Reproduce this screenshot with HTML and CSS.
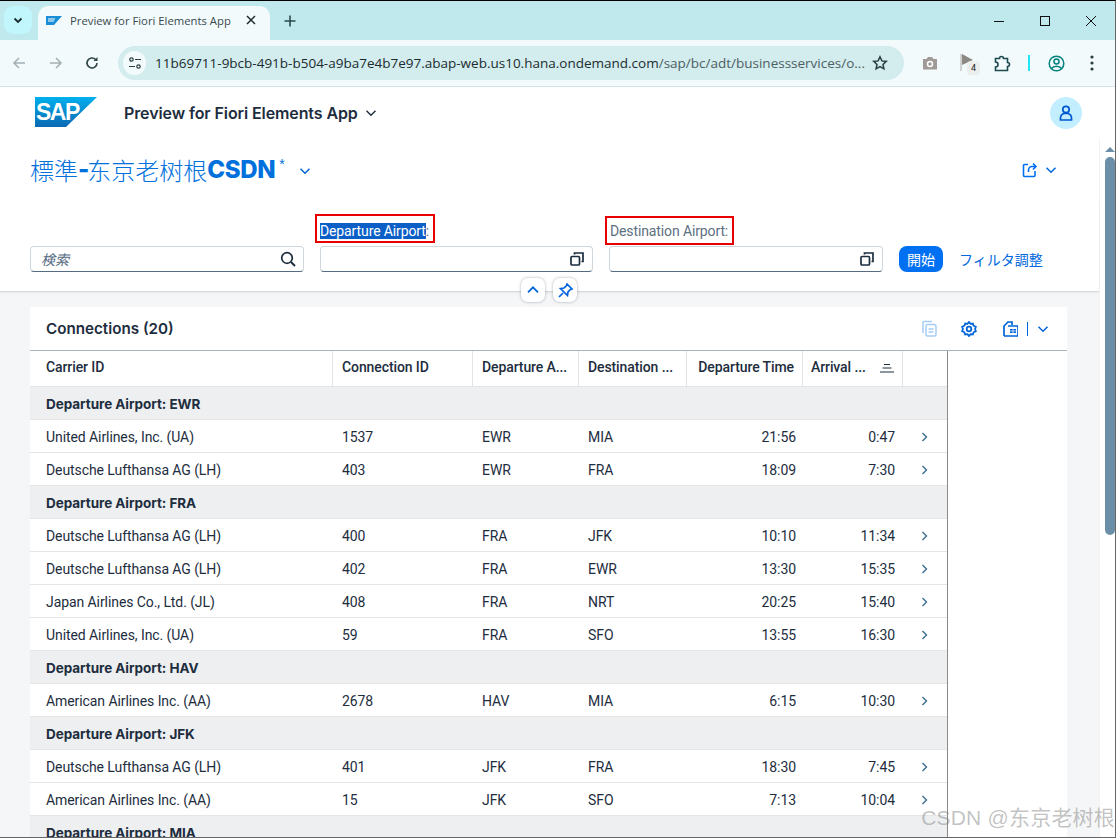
FILE: index.html
```html
<!DOCTYPE html>
<html lang="en">
<head>
<meta charset="utf-8">
<title>Preview for Fiori Elements App</title>
<link rel="stylesheet" href="styles.css">
</head>
<body>
<div class="window">
  <div class="tabbar">
    <button class="tab-menu"><svg width="12" height="12" viewBox="0 0 12 12"><path d="M2.5 4.5 6 8l3.5-3.5" fill="none" stroke="#1b2b2e" stroke-width="1.8"/></svg></button>
    <div class="tab">
      <svg class="tab-logo" width="16" height="9" viewBox="0 0 16 9"><polygon points="0,0 16,0 8,9 0,9" fill="#1a8fd8"/><path d="M2 3h7M2 5h6" stroke="#fff" stroke-width="1"/></svg>
      <span class="tab-title">Preview for Fiori Elements App</span>
      <svg class="tab-close" width="10" height="10" viewBox="0 0 10 10"><path d="M1 1l8 8M9 1l-8 8" stroke="#1f2b2d" stroke-width="1.5"/></svg>
    </div>
    <svg class="tab-plus" width="12" height="12" viewBox="0 0 12 12"><path d="M6 .5v11M.5 6h11" stroke="#2b4a4e" stroke-width="1.6"/></svg>
    <div class="win-controls">
      <svg width="12" height="12" viewBox="0 0 12 12"><path d="M1 6.5h10" stroke="#111" stroke-width="1"/></svg>
      <svg width="12" height="12" viewBox="0 0 12 12"><rect x="1.5" y="1.5" width="9" height="9" fill="none" stroke="#111"/></svg>
      <svg width="12" height="12" viewBox="0 0 12 12"><path d="M1 1l10 10M11 1 1 11" stroke="#111" stroke-width="1"/></svg>
    </div>
  </div>
  <div class="toolbar">
    <svg class="nav" width="14" height="14" viewBox="0 0 14 14"><path d="M13 7H2M7 2 2 7l5 5" fill="none" stroke="#a3b0b2" stroke-width="1.5"/></svg>
    <svg class="nav" width="14" height="14" viewBox="0 0 14 14"><path d="M1 7h11M7 2l5 5-5 5" fill="none" stroke="#a3b0b2" stroke-width="1.5"/></svg>
    <svg class="nav" width="14" height="14" viewBox="0 0 14 14"><path d="M12 7a5 5 0 1 1-1.5-3.6" fill="none" stroke="#2e4447" stroke-width="1.6"/><path d="M12.5 1v4h-4z" fill="#2e4447"/></svg>
    <div class="address">
      <span class="chip"><svg width="14" height="12" viewBox="0 0 14 12"><circle cx="3.5" cy="2.5" r="1.7" fill="none" stroke="#2b3e41" stroke-width="1.2"/><path d="M7 2.500h6M1 9.500h6" stroke="#2b3e41" stroke-width="1.2"/><circle cx="10.500" cy="9.500" r="1.700" fill="none" stroke="#2b3e41" stroke-width="1.2"/></svg></span>
      <span class="url"><span class="host">11b69711-9bcb-491b-b504-a9ba7e4b7e97.abap-web.us10.hana.ondemand.com</span>/sap/bc/adt/businessservices/o...</span>
      <svg class="star" width="16" height="16" viewBox="0 0 16 16"><path d="m8 1.800 1.900 4.100 4.400.5-3.300 3 .9 4.400L8 11.600l-3.900 2.200.9-4.400-3.300-3 4.400-.5z" fill="none" stroke="#2b3e41" stroke-width="1.500"/></svg>
    </div>
    <div class="ext-icons">
      <svg width="16" height="14" viewBox="0 0 16 14"><path d="M1 3h3.500L6 1h4l1.500 2H15v10.500H1z" fill="#a09a97"/><circle cx="8" cy="8" r="2.500" fill="none" stroke="#fff" stroke-width="1.500"/></svg>
      <span class="flag"><svg width="14" height="17" viewBox="0 0 14 17"><path d="M1 0v17" stroke="#c4c4c4" stroke-width="1.500"/><path d="M2 0l11 6-11 5z" fill="#8c8884"/></svg><span class="flag-badge">4</span></span>
      <svg width="17" height="17" viewBox="0 0 17 17"><path d="M1.500 3.500h4a2 2 0 0 1 4 0h4v4a2 2 0 0 1 0 4v4h-12v-3.500a2 2 0 0 0 0-5z" fill="none" stroke="#1d4a4e" stroke-width="1.600"/></svg>
      <span class="ext-sep"></span>
      <svg width="17" height="17" viewBox="0 0 17 17"><circle cx="8.500" cy="8.500" r="7.300" fill="none" stroke="#00817d" stroke-width="1.500"/><circle cx="8.500" cy="6.500" r="2.500" fill="none" stroke="#00817d" stroke-width="1.500"/><path d="M3.500 13.500c2-3 8-3 10 0" fill="none" stroke="#00817d" stroke-width="1.500"/></svg>
      <svg width="4" height="16" viewBox="0 0 4 16"><circle cx="2" cy="2" r="1.600" fill="#2b3e41"/><circle cx="2" cy="8" r="1.600" fill="#2b3e41"/><circle cx="2" cy="14" r="1.600" fill="#2b3e41"/></svg>
    </div>
  </div>

  <div class="page">
    <div class="content">
      <header class="shell">
        <svg class="sap-logo" width="62" height="30" viewBox="0 0 62 30">
          <defs><linearGradient id="sapg" x1="0" y1="0" x2="0" y2="1"><stop offset="0" stop-color="#00b0ee"/><stop offset="1" stop-color="#0a68b2"/></linearGradient></defs>
          <polygon points="0,0 62,0 31,30 0,30" fill="url(#sapg)"/>
          <text x="1" y="23" class="sap-text">SAP</text>
        </svg>
        <span class="shell-title">Preview for Fiori Elements App</span>
        <svg class="shell-caret" width="12" height="12" viewBox="0 0 12 12"><path d="M1.500 3.800 6 8.300l4.500-4.500" fill="none" stroke="#1d2d3e" stroke-width="1.400"/></svg>
        <span class="avatar"><svg width="14" height="16" viewBox="0 0 14 16"><circle cx="7" cy="4.500" r="3.200" fill="none" stroke="#0057d2" stroke-width="1.700"/><path d="M1.500 15v-2c0-2.500 2-4 3.500-4.500h4c1.500.5 3.500 2 3.500 4.500v2z" fill="none" stroke="#0057d2" stroke-width="1.700"/></svg></span>
      </header>

      <div class="title-row">
        <h1 class="variant"><span class="cjk">標準</span><b class="latin dash">-</b><span class="cjk">东京老树根</span><b class="latin">CSDN</b><sup class="dirty">*</sup></h1>
        <svg class="variant-caret" width="12" height="12" viewBox="0 0 12 12"><path d="M1.500 3.800 6 8.300l4.500-4.500" fill="none" stroke="#0064d9" stroke-width="1.500"/></svg>
        <span class="share">
          <svg width="16" height="16" viewBox="0 0 16 16"><path d="M6 2.500H2.500a1 1 0 0 0-1 1v10a1 1 0 0 0 1 1h9.500a1 1 0 0 0 1-1V9" fill="none" stroke="#0070f2" stroke-width="1.600"/><path d="M6.500 10V8c0-2 1.500-3.500 3.500-3.500h4M11 1.500l3 3-3 3" fill="none" stroke="#0070f2" stroke-width="1.600"/></svg>
          <svg width="12" height="12" viewBox="0 0 12 12"><path d="M1.500 3.800 6 8.300l4.500-4.500" fill="none" stroke="#0064d9" stroke-width="1.500"/></svg>
        </span>
      </div>

      <div class="filters">
        <div class="filter filter-search">
          <div class="field">
            <span class="placeholder">検索</span>
            <svg width="16" height="16" viewBox="0 0 16 16"><circle cx="7" cy="7" r="5.300" fill="none" stroke="#1d2d3e" stroke-width="1.700"/><path d="m11 11 4 4" stroke="#1d2d3e" stroke-width="1.900"/></svg>
          </div>
        </div>
        <div class="filter filter-dep">
          <div class="label-box label-box-dep"><span class="label"><span class="selected">Departure Airport</span>:</span></div>
          <div class="field field-value">
            <svg width="14" height="14" viewBox="0 0 14 14"><rect x="1" y="4.500" width="8.500" height="8.500" rx="1" fill="none" stroke="#1d2d3e" stroke-width="1.700"/><path d="M4.500 2.500V1h8.500v8.500h-1.500" fill="none" stroke="#1d2d3e" stroke-width="1.700"/></svg>
          </div>
        </div>
        <div class="filter filter-dest">
          <div class="label-box label-box-dest"><span class="label label-plain">Destination Airport:</span></div>
          <div class="field field-value">
            <svg width="14" height="14" viewBox="0 0 14 14"><rect x="1" y="4.500" width="8.500" height="8.500" rx="1" fill="none" stroke="#1d2d3e" stroke-width="1.700"/><path d="M4.500 2.500V1h8.500v8.500h-1.500" fill="none" stroke="#1d2d3e" stroke-width="1.700"/></svg>
          </div>
        </div>
        <button class="go">開始</button>
        <a class="adapt">フィルタ調整</a>
        <div class="collapse-btns">
          <span class="mini-btn"><svg width="12" height="12" viewBox="0 0 12 12"><path d="M1 8.300 6 3.300l5 5" fill="none" stroke="#0064d9" stroke-width="1.700"/></svg></span>
          <span class="mini-btn"><svg width="15" height="15" viewBox="0 0 15 15"><path d="M9 1l5 5-1.500.5L10 9l-.5 3.500L2.500 5.500 6 5l2.500-2.500z" fill="none" stroke="#0064d9" stroke-width="1.700"/><path d="M5 10l-4 4" stroke="#0064d9" stroke-width="1.700"/></svg></span>
        </div>
      </div>

      <main class="stage">
        <section class="card">
          <div class="card-head">
            <h2 class="card-title">Connections (20)</h2>
            <div class="card-actions">
              <svg width="16" height="17" viewBox="0 0 16 17"><path d="M2 13V2.500a1 1 0 0 1 1-1h8" fill="none" stroke="#a6cdf7" stroke-width="1.500"/><rect x="5" y="4.500" width="10" height="11.500" rx="1.500" fill="none" stroke="#a6cdf7" stroke-width="1.500"/><path d="M7.500 9h5M7.500 12h5" stroke="#a6cdf7" stroke-width="1.500"/></svg>
              <svg class="gear" width="16" height="16" viewBox="0 0 16 16"><path d="M8 1l1.500 1.800 2.300-.3.800 2.200 2.200 1-.7 2.300.7 2.300-2.200 1-.8 2.200-2.300-.3L8 15l-1.500-1.800-2.300.3-.8-2.200-2.200-1 .7-2.300-.7-2.300 2.200-1 .8-2.200 2.300.3z" fill="none" stroke="#0064d9" stroke-width="1.800"/><circle cx="8" cy="8" r="2.300" fill="none" stroke="#0064d9" stroke-width="1.800"/></svg>
              <span class="export">
                <svg width="15" height="16" viewBox="0 0 15 16"><path d="M1 15V5l4-4h4v3" fill="none" stroke="#0064d9" stroke-width="1.700"/><path d="M1 15h14V5H5" fill="none" stroke="#0064d9" stroke-width="1.700"/><path d="M7 8h6v4H7z" fill="#0064d9"/><path d="M10 8v4M7 10h6" stroke="#fff" stroke-width=".7"/></svg>
                <span class="export-sep"></span>
                <svg width="12" height="12" viewBox="0 0 12 12"><path d="M1.500 3.800 6 8.300l4.500-4.500" fill="none" stroke="#0064d9" stroke-width="1.500"/></svg>
              </span>
            </div>
          </div>
          <div class="table-wrap">
            <table class="grid">
              <colgroup><col class="c1"><col class="c2"><col class="c3"><col class="c4"><col class="c5"><col class="c6"><col class="c7"></colgroup>
              <thead>
                <tr><th>Carrier ID</th><th class="pad9">Connection ID</th><th class="pad9">Departure A...</th><th class="pad9">Destination ...</th><th class="num">Departure Time</th><th class="pad8 sorted"><span>Arrival ...</span><svg width="14" height="10" viewBox="0 0 14 10"><path d="M4 1.500h6M2.500 5h9M0 9h14" stroke="#1d2d3e" stroke-width="1"/></svg></th><th></th></tr>
              </thead>
              <tbody>
                <tr class="group"><td colspan="7">Departure Airport: EWR</td></tr>
                <tr><td>United Airlines, Inc. (UA)</td><td class="pad9">1537</td><td class="pad9">EWR</td><td class="pad9">MIA</td><td class="num t5">21:56</td><td class="num">0:47</td><td class="nav-cell"><svg width="7" height="10" viewBox="0 0 7 10"><path d="m1.500 1 4 4-4 4" fill="none" stroke="#3a6d8c" stroke-width="1.400"/></svg></td></tr>
                <tr><td>Deutsche Lufthansa AG (LH)</td><td class="pad9">403</td><td class="pad9">EWR</td><td class="pad9">FRA</td><td class="num t5">18:09</td><td class="num">7:30</td><td class="nav-cell"><svg width="7" height="10" viewBox="0 0 7 10"><path d="m1.500 1 4 4-4 4" fill="none" stroke="#3a6d8c" stroke-width="1.400"/></svg></td></tr>
                <tr class="group"><td colspan="7">Departure Airport: FRA</td></tr>
                <tr><td>Deutsche Lufthansa AG (LH)</td><td class="pad9">400</td><td class="pad9">FRA</td><td class="pad9">JFK</td><td class="num t5">10:10</td><td class="num">11:34</td><td class="nav-cell"><svg width="7" height="10" viewBox="0 0 7 10"><path d="m1.500 1 4 4-4 4" fill="none" stroke="#3a6d8c" stroke-width="1.400"/></svg></td></tr>
                <tr><td>Deutsche Lufthansa AG (LH)</td><td class="pad9">402</td><td class="pad9">FRA</td><td class="pad9">EWR</td><td class="num t5">13:30</td><td class="num">15:35</td><td class="nav-cell"><svg width="7" height="10" viewBox="0 0 7 10"><path d="m1.500 1 4 4-4 4" fill="none" stroke="#3a6d8c" stroke-width="1.400"/></svg></td></tr>
                <tr><td>Japan Airlines Co., Ltd. (JL)</td><td class="pad9">408</td><td class="pad9">FRA</td><td class="pad9">NRT</td><td class="num t5">20:25</td><td class="num">15:40</td><td class="nav-cell"><svg width="7" height="10" viewBox="0 0 7 10"><path d="m1.500 1 4 4-4 4" fill="none" stroke="#3a6d8c" stroke-width="1.400"/></svg></td></tr>
                <tr><td>United Airlines, Inc. (UA)</td><td class="pad9">59</td><td class="pad9">FRA</td><td class="pad9">SFO</td><td class="num t5">13:55</td><td class="num">16:30</td><td class="nav-cell"><svg width="7" height="10" viewBox="0 0 7 10"><path d="m1.500 1 4 4-4 4" fill="none" stroke="#3a6d8c" stroke-width="1.400"/></svg></td></tr>
                <tr class="group"><td colspan="7">Departure Airport: HAV</td></tr>
                <tr><td>American Airlines Inc. (AA)</td><td class="pad9">2678</td><td class="pad9">HAV</td><td class="pad9">MIA</td><td class="num t5">6:15</td><td class="num">10:30</td><td class="nav-cell"><svg width="7" height="10" viewBox="0 0 7 10"><path d="m1.500 1 4 4-4 4" fill="none" stroke="#3a6d8c" stroke-width="1.400"/></svg></td></tr>
                <tr class="group"><td colspan="7">Departure Airport: JFK</td></tr>
                <tr><td>Deutsche Lufthansa AG (LH)</td><td class="pad9">401</td><td class="pad9">JFK</td><td class="pad9">FRA</td><td class="num t5">18:30</td><td class="num">7:45</td><td class="nav-cell"><svg width="7" height="10" viewBox="0 0 7 10"><path d="m1.500 1 4 4-4 4" fill="none" stroke="#3a6d8c" stroke-width="1.400"/></svg></td></tr>
                <tr><td>American Airlines Inc. (AA)</td><td class="pad9">15</td><td class="pad9">JFK</td><td class="pad9">SFO</td><td class="num t5">7:13</td><td class="num">10:04</td><td class="nav-cell"><svg width="7" height="10" viewBox="0 0 7 10"><path d="m1.500 1 4 4-4 4" fill="none" stroke="#3a6d8c" stroke-width="1.400"/></svg></td></tr>
                <tr class="group"><td colspan="7">Departure Airport: MIA</td></tr>
              </tbody>
            </table>
          </div>
        </section>
      </main>
    </div>
    <div class="scrollbar">
      <span class="arrow-up"></span>
      <span class="thumb"></span>
    </div>
  </div>
  <div class="watermark">CSDN @东京老树根</div>
</div>
</body>
</html>
```
FILE: styles.css
```css
* { box-sizing: border-box; }
html, body { margin: 0; height: 100%; background: #fff; overflow: hidden; }
body { font-family: Roboto, "Liberation Sans", "Noto Sans CJK JP", sans-serif; font-size: 14px; color: #1d2d3e; }
svg { display: block; flex: none; }
button { font: inherit; border: 0; padding: 0; }

.window { position: relative; width: 1116px; height: 838px; display: flex; flex-direction: column; border-top: 1px solid #000; border-right: 1px solid #666; border-bottom: 1px solid #666; overflow: hidden; }

.tabbar { height: 39px; flex: none; background: #bfe9ec; display: flex; align-items: flex-start; padding: 5px 0 0 4px; }
.tab-menu { width: 28px; height: 28px; border-radius: 9px; background: #c0f6fc; display: flex; align-items: center; justify-content: center; }
.tab { margin-left: 6px; width: 232px; height: 34px; background: #f2fafc; border-radius: 10px 10px 0 0; display: flex; align-items: center; padding: 0 14px 6px 8px; }
.tab-title { margin-left: 8px; font-family: "Open Sans", "Liberation Sans", sans-serif; font-size: 11.300px; color: #3a4a4d; white-space: nowrap; flex: 1; }
.tab-plus { margin: 9px 0 0 14px; }
.win-controls { margin-left: auto; display: flex; gap: 34px; padding: 9px 18px 0 0; }

.toolbar { height: 47px; flex: none; background: #f2fafc; border-bottom: 1px solid #d5e3e6; display: flex; align-items: center; padding: 0 0 0 12px; }
.nav { margin-right: 23px; }
.nav:nth-child(3) { margin-right: 0; margin-left: -1px; }
.address { margin-left: 19px; width: 786px; height: 34px; border-radius: 17px; background: #d3ecee; display: flex; align-items: center; padding-left: 5px; }
.chip { width: 23px; height: 24px; border-radius: 12px; background: #f2fafc; display: flex; align-items: center; justify-content: center; }
.url { margin-left: 9px; font-family: "Open Sans", "Liberation Sans", sans-serif; font-size: 13.500px; color: #4d6063; white-space: nowrap; flex: 1; overflow: hidden; }
.host { color: #1c2c2f; }
.star { margin-right: 16px; }
.ext-icons { margin-left: 18px; display: flex; align-items: center; }
.ext-icons > svg:nth-child(1) { margin-right: 22px; }
.flag { position: relative; width: 22px; height: 18px; margin-right: 12px; }
.flag-badge { position: absolute; left: 7px; top: 7px; width: 13px; height: 14px; background: #eceeee; border-radius: 4px; font-size: 9px; line-height: 14px; text-align: center; color: #222; }
.ext-sep { width: 2px; height: 16px; background: #22e6f5; margin: 0 18px 0 17px; }
.ext-icons > svg:last-child { margin-left: 25px; }

.page { flex: 1; min-height: 0; display: flex; }
.content { width: 1099px; flex: none; display: flex; flex-direction: column; min-height: 0; position: relative; }

.shell { height: 52px; flex: none; display: flex; align-items: center; padding: 0 0 0 35px; }
.sap-logo { margin-top: -2px; }
.sap-text { font-family: "Liberation Sans", sans-serif; font-weight: 700; font-size: 23px; fill: #fff; letter-spacing: -1.500px; }
.shell-title { margin-left: 27px; font-family: Inter, Roboto, sans-serif; font-size: 16px; font-weight: 600; letter-spacing: -.1px; white-space: nowrap; }
.shell-caret { margin-left: 7px; }
.avatar { margin-left: auto; margin-right: 17px; width: 32px; height: 32px; border-radius: 50%; background: #c2eeff; display: flex; align-items: center; justify-content: center; }

.title-row { height: 60px; flex: none; display: flex; align-items: center; padding: 1px 42px 0 30px; }
.variant { margin: 0; font-size: 24px; font-weight: 400; line-height: 32px; color: #0070dd; white-space: nowrap; display: flex; }
.cjk { font-family: "Noto Sans CJK SC", sans-serif; font-weight: 300; }
.latin { font-family: Inter, "Liberation Sans", sans-serif; font-weight: 800; letter-spacing: -.4px; }
.dash { letter-spacing: -2px; }
.dirty { font-size: 14px; line-height: 20px; font-family: "Liberation Sans", sans-serif; margin-left: 4px; }
.variant-caret { margin-left: 14px; margin-top: 2px; }
.share { margin-left: auto; display: flex; align-items: center; gap: 7px; }

.filters { flex: none; height: 93px; position: relative; display: flex; align-items: flex-end; padding: 0 0 19px 30px; border-bottom: 1px solid #d9d9d9; box-shadow: 0 1px 2px rgba(0,0,0,.06); z-index: 1; background: #fff; }
.filter { display: flex; flex-direction: column; }
.filter-search { width: 274px; }
.filter-dep { width: 273px; margin-left: 16px; }
.filter-dest { width: 274px; margin-left: 16px; }
.label-box { border: 2px solid #e80000; width: max-content; font-size: 14px; height: 29px; letter-spacing: -.12px; }
.label-box-dep { margin: 0 0 3px -5px; padding: 0 3px; width: 120px; line-height: 30px; }
.label-box-dest { margin: 0 0 1px -4px; padding: 0 3px; width: 129px; line-height: 26px; }
.label { color: #556b82; white-space: nowrap; }
.selected { background: #0b5fc7; color: #fff; }
.label-plain { color: #5b7080; }
.field { height: 26px; border: 1px solid #d0d7dc; border-bottom: 1px solid #556b82; border-radius: 4px; display: flex; align-items: center; justify-content: space-between; padding: 0 7px 0 10px; background: #fff; }
.field-value { justify-content: flex-end; padding-right: 8px; }
.placeholder { font-family: "Noto Sans CJK JP", sans-serif; font-size: 14px; font-style: italic; color: #556b82; }
.go { margin-left: 16px; width: 44px; height: 26px; border-radius: 8px; background: #0070f2; color: #fff; font-family: "Noto Sans CJK JP", sans-serif; font-size: 14px; }
.adapt { margin-left: 16px; line-height: 26px; font-family: "Noto Sans CJK JP", sans-serif; font-size: 14px; font-weight: 400; color: #0068e0; white-space: nowrap; }
.collapse-btns { position: absolute; left: 521px; top: 79px; display: flex; gap: 8px; }
.mini-btn { width: 24px; height: 24px; border-radius: 7px; background: #fff; box-shadow: 0 0 3px rgba(60,80,100,.45); display: flex; align-items: center; justify-content: center; }

.stage { flex: 1; min-height: 0; background: #f5f6f7; padding: 15px 32px 0 30px; overflow: hidden; }
.card { background: #fff; }
.card-head { height: 44px; display: flex; align-items: center; justify-content: space-between; padding: 0 18px 0 16px; border-bottom: 1px solid #a8b3bd; }
.card-title { margin: 0; font-family: Inter, Roboto, sans-serif; font-size: 15.200px; font-weight: 600; }
.card-actions { display: flex; align-items: center; }
.gear { margin-left: 24px; }
.export { margin-left: 26px; display: flex; align-items: center; gap: 9px; }
.export-sep { width: 1px; height: 14px; background: #0064d9; margin-right: 0; }

.grid { width: 917px; table-layout: fixed; border-collapse: separate; border-spacing: 0; border-right: 1px solid #8a8a8a; }
.c1 { width: 303px; } .c2 { width: 140px; } .c3 { width: 106px; } .c4 { width: 108px; } .c5 { width: 116px; } .c6 { width: 100px; } .c7 { width: 44px; }
.grid th, .grid td { padding: 0 0 0 16px; font-size: 14px; white-space: nowrap; overflow: hidden; }
.grid th { height: 36px; padding-bottom: 4px; font-weight: 500; letter-spacing: -.1px; text-align: left; border-bottom: 1px solid #e1e4e6; border-right: 1px solid #e1e4e6; }
.grid th:last-child { border-right: 0; }
.grid td { height: 33px; padding-top: 2px; border-bottom: 1px solid #e5e5e5; font-weight: 400; letter-spacing: -.08px; }
.grid .pad9 { padding-left: 9px; }
.grid .pad8 { padding-left: 8px; }
.grid .num { text-align: right; padding-left: 0; padding-right: 8px; }
.grid .t5 { padding-right: 7px; }
.grid th.sorted { padding-right: 8px; }
.sorted { position: relative; }
.sorted svg { position: absolute; right: 8px; top: 12px; }
.nav-cell svg { margin-left: 2px; }
.group td { background: #edeff0; font-family: Inter, Roboto, sans-serif; font-size: 13.500px; font-weight: 700; letter-spacing: -.05px; }

.scrollbar { flex: 1; margin-top: 52px; background: #fff; border-left: 1px solid #f2f2f2; position: relative; display: flex; flex-direction: column; align-items: center; padding-top: 8px; }
.arrow-up { width: 0; height: 0; border-left: 5px solid transparent; border-right: 5px solid transparent; border-bottom: 5px solid #6b8fa6; margin-left: 5px; }
.thumb { width: 10px; height: 378px; background: #6b8fa6; border-radius: 5px; margin: 5px 0 0 5px; }

.watermark { position: absolute; right: 0; bottom: 6px; font-family: "Liberation Sans", "Noto Sans CJK SC", sans-serif; font-size: 21px; color: rgba(120,120,120,.45); white-space: nowrap; letter-spacing: .2px; }
```
